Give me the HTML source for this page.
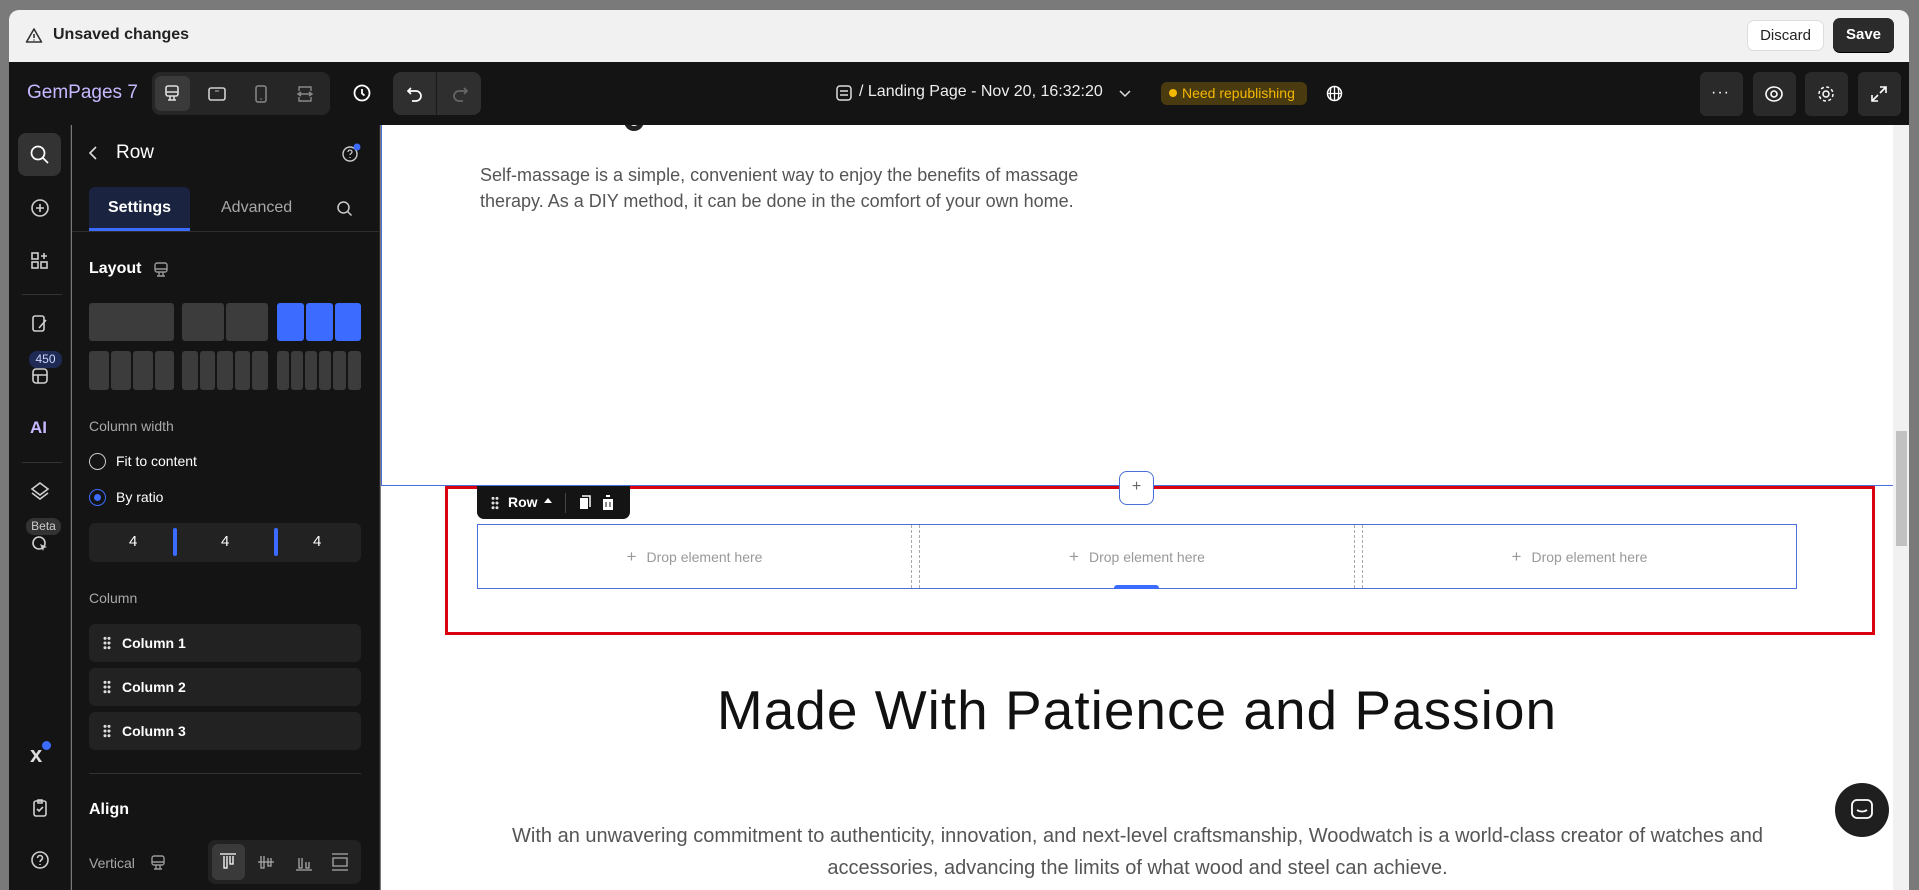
<!DOCTYPE html>
<html><head><meta charset="utf-8"><style>
*{box-sizing:border-box;margin:0;padding:0}
body{width:1919px;height:890px;background:#7a7a7a;font-family:"Liberation Sans",sans-serif;position:relative;overflow:hidden}
.a{position:absolute}
.top{left:9px;top:10px;width:1900px;height:52px;background:#f1f1f1;border-radius:10px 10px 0 0}
.tb{left:9px;top:62px;width:1900px;height:63px;background:#141414}
.rail{left:9px;top:125px;width:62px;height:765px;background:#141414;border-right:1px solid #2a2a2a}
.panel{left:72px;top:125px;width:308px;height:765px;background:#141414;border-right:1px solid #2a2a2a}
.canvas{left:381px;top:125px;width:1512px;height:765px;background:#fff}
.btn{background:#2a2a2a;border-radius:6px}
.w{color:#fff}
.g{color:#a8a8a8}
.lb{background:#3c3c3c;border-radius:3px}
.lbb{background:#3b6cff;border-radius:3px}
.col{left:89px;width:272px;height:38px;background:#222;border-radius:6px;color:#fff;font-size:14px;font-weight:bold;line-height:38px;padding-left:33px}
.dots{position:absolute;left:14px;top:12px;width:8px;height:14px;background:radial-gradient(circle,#ddd 1.4px,transparent 1.6px) 0 0/4px 4.7px}
.ic{stroke:#cfcfcf;fill:none;stroke-width:1.6}
</style></head><body>
<div class="a top"></div>
<svg class="a" style="left:25px;top:27px" width="18" height="17" viewBox="0 0 18 17"><path d="M9 2L16.5 15H1.5Z" fill="none" stroke="#333" stroke-width="1.6" stroke-linejoin="round"/><path d="M9 7v4M9 12.5v1" stroke="#333" stroke-width="1.6"/></svg>
<div class="a" style="left:53px;top:26px;font-size:16px;font-weight:bold;color:#222">Unsaved changes</div>
<div class="a" style="left:1747px;top:20px;width:77px;height:31px;background:#fff;border:1px solid #ddd;border-radius:7px;font-size:15px;color:#222;text-align:center;line-height:29px">Discard</div>
<div class="a" style="left:1833px;top:18px;width:61px;height:34px;background:#2b2b2b;border-radius:7px;font-size:15px;font-weight:bold;color:#fff;text-align:center;line-height:34px;box-shadow:0 1px 0 #000">Save</div>

<div class="a tb"></div>
<div class="a" style="left:27px;top:82px;font-size:19px;color:#c8b8ff">GemPages 7</div>
<div class="a" style="left:152px;top:72px;width:178px;height:43px;background:#262626;border-radius:8px"></div>
<div class="a" style="left:155px;top:76px;width:35px;height:35px;background:#3a3a3a;border-radius:6px"></div>
<svg class="a" style="left:163px;top:84px" width="18" height="20"><rect x="3" y="2" width="12" height="10" rx="2" fill="none" stroke="#ddd" stroke-width="1.6"/><path d="M3 8h12M7 12v4M11 12v4M5 16h8" stroke="#ddd" stroke-width="1.6"/></svg>
<svg class="a" style="left:207px;top:84px" width="20" height="20"><rect x="2" y="4" width="16" height="12" rx="2" class="ic" stroke="#888"/><path d="M8 7h4" stroke="#888" stroke-width="1.5"/></svg>
<svg class="a" style="left:251px;top:84px" width="20" height="20"><rect x="5" y="2" width="10" height="16" rx="2" fill="none" stroke="#888" stroke-width="1.5"/><path d="M9 15h2" stroke="#888"/></svg>
<svg class="a" style="left:295px;top:84px" width="20" height="20"><path d="M4 7V3h12v4M4 13v4h12v-4M3 10h14M6 8l-3 2 3 2M14 8l3 2-3 2" fill="none" stroke="#888" stroke-width="1.4"/></svg>
<svg class="a" style="left:352px;top:83px" width="20" height="20"><circle cx="10" cy="10" r="7.5" fill="none" stroke="#fff" stroke-width="1.8"/><path d="M10 6v4.5l2.5 2" stroke="#fff" stroke-width="1.8" fill="none"/></svg>
<div class="a" style="left:393px;top:72px;width:88px;height:43px;background:#2f2f2f;border-radius:8px"></div>
<div class="a" style="left:436px;top:72px;width:1px;height:43px;background:#1a1a1a"></div>
<svg class="a" style="left:405px;top:84px" width="20" height="20"><path d="M6 4L3 7l3 3M3 7h8a5 5 0 010 10H7" fill="none" stroke="#fff" stroke-width="1.7"/></svg>
<svg class="a" style="left:450px;top:84px" width="20" height="20"><path d="M14 4l3 3-3 3M17 7H9a5 5 0 000 10h4" fill="none" stroke="#666" stroke-width="1.7"/></svg>
<svg class="a" style="left:835px;top:84px" width="18" height="18"><rect x="2" y="2" width="14" height="14" rx="3" fill="none" stroke="#ddd" stroke-width="1.5"/><path d="M5 7h8M5 11h8" stroke="#ddd" stroke-width="1.4"/></svg>
<div class="a" style="left:859px;top:83px;font-size:16px;color:#eee">/ Landing Page - Nov 20, 16:32:20</div>
<svg class="a" style="left:1118px;top:86px" width="14" height="14"><path d="M2 5l5 5 5-5" fill="none" stroke="#ddd" stroke-width="1.5"/></svg>
<div class="a" style="left:1161px;top:82px;width:146px;height:23px;background:#4a3a10;border-radius:6px;color:#f5b800;font-size:14px;line-height:23px;padding-left:21px">Need republishing</div>
<div class="a" style="left:1169px;top:89px;width:8px;height:8px;border-radius:50%;background:#f5b800"></div>
<svg class="a" style="left:1325px;top:84px" width="19" height="19"><circle cx="9.5" cy="9.5" r="7" fill="none" stroke="#fff" stroke-width="1.5"/><path d="M2.5 9.5h14M9.5 2.5v14M6 4c-1 3-1 8 0 11M13 4c1 3 1 8 0 11" fill="none" stroke="#fff" stroke-width="1.3"/></svg>
<div class="a btn" style="left:1700px;top:72px;width:43px;height:44px"></div>
<div class="a" style="left:1711px;top:84px;color:#fff;font-size:16px;letter-spacing:1px">···</div>
<div class="a btn" style="left:1753px;top:72px;width:43px;height:44px"></div>
<svg class="a" style="left:1764px;top:84px" width="20" height="20"><ellipse cx="10" cy="10" rx="8" ry="7" fill="none" stroke="#fff" stroke-width="1.6"/><circle cx="10" cy="10" r="3" fill="none" stroke="#fff" stroke-width="1.6"/></svg>
<div class="a btn" style="left:1805px;top:72px;width:43px;height:44px"></div>
<svg class="a" style="left:1816px;top:84px" width="20" height="20"><circle cx="10" cy="10" r="3" fill="none" stroke="#fff" stroke-width="1.5"/><circle cx="10" cy="10" r="7" fill="none" stroke="#fff" stroke-width="1.5" stroke-dasharray="3 2.5"/></svg>
<div class="a btn" style="left:1858px;top:72px;width:43px;height:44px"></div>
<svg class="a" style="left:1869px;top:84px" width="20" height="20"><path d="M11 3h6v6M17 3l-6 6M9 17H3v-6M3 17l6-6" fill="none" stroke="#fff" stroke-width="1.6"/></svg>

<div class="a rail"></div>
<div class="a" style="left:18px;top:133px;width:43px;height:43px;background:#333;border-radius:8px"></div>
<svg class="a" style="left:29px;top:144px" width="22" height="22"><circle cx="9" cy="9" r="6.5" fill="none" stroke="#fff" stroke-width="1.7"/><path d="M14 14l5 5" stroke="#fff" stroke-width="1.7"/></svg>
<svg class="a" style="left:29px;top:197px" width="22" height="22"><circle cx="11" cy="11" r="8" class="ic"/><path d="M11 7v8M7 11h8" class="ic"/></svg>
<svg class="a" style="left:30px;top:251px" width="20" height="20"><rect x="2" y="2" width="6" height="6" class="ic"/><rect x="2" y="11" width="6" height="6" class="ic"/><rect x="11" y="11" width="6" height="6" class="ic"/><path d="M14 2v6M11 5h6" class="ic"/></svg>
<div class="a" style="left:22px;top:294px;width:40px;height:1px;background:#333"></div>
<svg class="a" style="left:30px;top:314px" width="20" height="20"><rect x="3" y="2" width="11" height="15" rx="2" class="ic"/><path d="M9 14l7-8" class="ic"/></svg>
<div class="a" style="left:29px;top:351px;width:33px;height:17px;background:#1f2a55;border-radius:8px;color:#cfd6ff;font-size:12px;text-align:center;line-height:17px">450</div>
<svg class="a" style="left:30px;top:366px" width="20" height="20"><rect x="3" y="3" width="14" height="14" rx="3" class="ic"/><path d="M3 9h14M8 9v8" class="ic"/></svg>
<div class="a" style="left:30px;top:418px;color:#c8b8ff;font-size:17px;font-weight:bold">AI</div>
<div class="a" style="left:22px;top:462px;width:40px;height:1px;background:#333"></div>
<svg class="a" style="left:30px;top:481px" width="20" height="20"><path d="M10 2l8 6-8 6-8-6z" class="ic"/><path d="M2 12l8 6 8-6" class="ic"/></svg>
<div class="a" style="left:26px;top:518px;width:35px;height:17px;background:#333;border-radius:8px;color:#ccc;font-size:12px;text-align:center;line-height:17px">Beta</div>
<svg class="a" style="left:31px;top:535px" width="20" height="20"><circle cx="8" cy="8" r="6" class="ic"/><path d="M9 9l7 3-3 1-1 3z" fill="#ccc"/></svg>
<div class="a" style="left:30px;top:742px;color:#ddd;font-size:22px;font-weight:bold">x</div>
<div class="a" style="left:42px;top:741px;width:9px;height:9px;border-radius:50%;background:#3b6cff"></div>
<svg class="a" style="left:30px;top:798px" width="20" height="20"><rect x="4" y="3" width="12" height="15" rx="2" class="ic"/><path d="M7 11l2 2 4-4M8 2h4v3H8z" class="ic"/></svg>
<svg class="a" style="left:30px;top:850px" width="20" height="20"><circle cx="10" cy="10" r="8" class="ic"/><path d="M7.5 8a2.5 2.5 0 115 0c0 2-2.5 2-2.5 4M10 14v1" class="ic"/></svg>

<div class="a panel"></div>
<svg class="a" style="left:87px;top:145px" width="14" height="16"><path d="M9 2L3 8l6 6" fill="none" stroke="#ddd" stroke-width="1.6"/></svg>
<div class="a w" style="left:116px;top:142px;font-size:19px">Row</div>
<svg class="a" style="left:341px;top:143px" width="20" height="20"><circle cx="9" cy="11" r="7" fill="none" stroke="#ccc" stroke-width="1.4"/><path d="M7 9a2 2 0 114 0c0 1.5-2 1.5-2 3M9 14v1" fill="none" stroke="#ccc" stroke-width="1.3"/><circle cx="16" cy="4" r="3.5" fill="#3b6cff"/></svg>
<div class="a" style="left:72px;top:231px;width:308px;height:1px;background:#2e2e2e"></div>
<div class="a" style="left:89px;top:187px;width:101px;height:44px;background:#1a2340;border-radius:6px 6px 0 0;border-bottom:3px solid #3b6cff;color:#fff;font-size:16px;font-weight:bold;text-align:center;line-height:42px">Settings</div>
<div class="a g" style="left:221px;top:199px;font-size:16px">Advanced</div>
<svg class="a" style="left:336px;top:200px" width="18" height="18"><circle cx="7.5" cy="7.5" r="5.5" fill="none" stroke="#ccc" stroke-width="1.5"/><path d="M11.5 11.5l4 4" stroke="#ccc" stroke-width="1.5"/></svg>
<div class="a w" style="left:89px;top:260px;font-size:16px;font-weight:bold">Layout</div>
<svg class="a" style="left:153px;top:261px" width="16" height="18"><rect x="2" y="2" width="12" height="9" rx="2" fill="none" stroke="#999" stroke-width="1.4"/><path d="M2 8h12M6 11v4M10 11v4M4 15h8" stroke="#999" stroke-width="1.4"/></svg>
<div class="a lb" style="left:89px;top:303px;width:85px;height:38px"></div>
<div class="a lb" style="left:182px;top:303px;width:42px;height:38px"></div>
<div class="a lb" style="left:226px;top:303px;width:42px;height:38px"></div>
<div class="a lbb" style="left:277px;top:303px;width:27px;height:38px"></div>
<div class="a lbb" style="left:306px;top:303px;width:27px;height:38px"></div>
<div class="a lbb" style="left:335px;top:303px;width:26px;height:38px"></div>
<div class="a lb" style="left:89px;top:351px;width:20px;height:39px"></div><div class="a lb" style="left:111px;top:351px;width:20px;height:39px"></div><div class="a lb" style="left:133px;top:351px;width:20px;height:39px"></div><div class="a lb" style="left:155px;top:351px;width:19px;height:39px"></div>
<div class="a lb" style="left:182px;top:351px;width:16px;height:39px"></div><div class="a lb" style="left:200px;top:351px;width:15px;height:39px"></div><div class="a lb" style="left:217px;top:351px;width:16px;height:39px"></div><div class="a lb" style="left:235px;top:351px;width:15px;height:39px"></div><div class="a lb" style="left:252px;top:351px;width:16px;height:39px"></div>
<div class="a lb" style="left:277px;top:351px;width:12px;height:39px"></div><div class="a lb" style="left:291px;top:351px;width:12px;height:39px"></div><div class="a lb" style="left:305px;top:351px;width:12px;height:39px"></div><div class="a lb" style="left:319px;top:351px;width:12px;height:39px"></div><div class="a lb" style="left:333px;top:351px;width:13px;height:39px"></div><div class="a lb" style="left:348px;top:351px;width:13px;height:39px"></div>
<div class="a g" style="left:89px;top:418px;font-size:14px">Column width</div>
<div class="a" style="left:89px;top:453px;width:17px;height:17px;border:1.5px solid #ccc;border-radius:50%"></div>
<div class="a w" style="left:116px;top:453px;font-size:14px">Fit to content</div>
<div class="a" style="left:89px;top:489px;width:17px;height:17px;border:1.5px solid #3b6cff;border-radius:50%"></div>
<div class="a" style="left:94px;top:494px;width:7px;height:7px;background:#3b6cff;border-radius:50%"></div>
<div class="a w" style="left:116px;top:489px;font-size:14px">By ratio</div>
<div class="a" style="left:89px;top:523px;width:272px;height:39px;background:#222;border-radius:6px"></div>
<div class="a w" style="left:129px;top:533px;font-size:15px">4</div>
<div class="a" style="left:173px;top:528px;width:4px;height:28px;background:#3b6cff;border-radius:2px"></div>
<div class="a w" style="left:221px;top:533px;font-size:15px">4</div>
<div class="a" style="left:274px;top:528px;width:4px;height:28px;background:#3b6cff;border-radius:2px"></div>
<div class="a w" style="left:313px;top:533px;font-size:15px">4</div>
<div class="a g" style="left:89px;top:590px;font-size:14px">Column</div>
<div class="a col" style="top:624px"><span class="dots"></span>Column 1</div>
<div class="a col" style="top:668px"><span class="dots"></span>Column 2</div>
<div class="a col" style="top:712px"><span class="dots"></span>Column 3</div>
<div class="a" style="left:89px;top:773px;width:272px;height:1px;background:#333"></div>
<div class="a w" style="left:89px;top:801px;font-size:16px;font-weight:bold">Align</div>
<div class="a g" style="left:89px;top:855px;font-size:14px">Vertical</div>
<svg class="a" style="left:150px;top:854px" width="16" height="18"><rect x="2" y="2" width="12" height="9" rx="2" fill="none" stroke="#999" stroke-width="1.4"/><path d="M2 8h12M6 11v4M10 11v4M4 15h8" stroke="#999" stroke-width="1.4"/></svg>
<div class="a" style="left:208px;top:840px;width:153px;height:44px;background:#222;border-radius:7px"></div>
<div class="a" style="left:212px;top:844px;width:33px;height:36px;background:#3a3a3a;border-radius:6px"></div>
<svg class="a" style="left:218px;top:852px" width="140" height="20"><path d="M2 2h16M6 4v12h3V4M12 4v8h3V4" fill="none" stroke="#fff" stroke-width="1.3"/><path d="M40 10h16M43 4v12h3V4M50 6v8h3V6" fill="none" stroke="#aaa" stroke-width="1.3"/><path d="M78 18h16M81 6v10h3V6M88 10v6h3v-6" fill="none" stroke="#aaa" stroke-width="1.3"/><path d="M114 2h16M114 18h16M115 6h14v8h-14z" fill="none" stroke="#aaa" stroke-width="1.3"/></svg>

<div class="a canvas"></div>
<div class="a" style="left:620px;top:125px;width:30px;height:8px;overflow:hidden"><div style="position:absolute;left:4px;top:-8px;width:20px;height:14px;border:5px solid #222;border-top:none;border-radius:0 0 10px 10px"></div></div>
<div class="a" style="left:480px;top:163px;width:620px;font-size:18px;line-height:25.5px;color:#555">Self-massage is a simple, convenient way to enjoy the benefits of massage therapy. As a DIY method, it can be done in the comfort of your own home.</div>
<div class="a" style="left:381px;top:125px;width:1px;height:361px;background:#4a6fd6"></div>
<div class="a" style="left:381px;top:485px;width:1512px;height:1px;background:#4a6fd6"></div>
<div class="a" style="left:445px;top:486px;width:1430px;height:149px;border:3px solid #d90010"></div>
<div class="a" style="left:1119px;top:471px;width:35px;height:34px;background:#fff;border:1px solid #4a6fd6;border-radius:8px;color:#666;text-align:center;line-height:30px;font-size:16px">+</div>
<div class="a" style="left:477px;top:486px;width:153px;height:33px;background:#141414;border-radius:0 0 7px 7px"></div>
<span class="a dots" style="left:491px;top:496px;width:8px;height:14px;background:radial-gradient(circle,#ddd 1.4px,transparent 1.6px) 0 0/4px 4.7px"></span>
<div class="a w" style="left:508px;top:494px;font-size:14px;font-weight:bold">Row</div>
<div class="a" style="left:544px;top:498px;width:0;height:0;border-left:4px solid transparent;border-right:4px solid transparent;border-bottom:5px solid #fff"></div>
<div class="a" style="left:565px;top:493px;width:1px;height:20px;background:#444"></div>
<svg class="a" style="left:577px;top:493px" width="40" height="20"><rect x="3" y="5" width="8" height="11" fill="#fff"/><path d="M5 3h8v11" fill="none" stroke="#fff" stroke-width="1.5"/><path d="M25 4h12M29 4V2h4v2M26 6h10v11H26z" fill="#fff"/><path d="M29 9v5M33 9v5" stroke="#141414" stroke-width="1"/></svg>
<div class="a" style="left:477px;top:524px;width:1320px;height:65px;border:1px solid #4a6fd6"></div>
<div class="a" style="left:911px;top:525px;width:9px;height:63px;border-left:1px dashed #aaa;border-right:1px dashed #aaa"></div>
<div class="a" style="left:1354px;top:525px;width:9px;height:63px;border-left:1px dashed #aaa;border-right:1px dashed #aaa"></div>
<div class="a" style="left:1114px;top:585px;width:45px;height:4px;background:#3b6cff;border-radius:3px 3px 0 0"></div>
<div class="a" style="left:478px;top:547px;width:433px;text-align:center;color:#999;font-size:14px"><span style="font-size:17px;margin-right:10px">+</span>Drop element here</div>
<div class="a" style="left:920px;top:547px;width:434px;text-align:center;color:#999;font-size:14px"><span style="font-size:17px;margin-right:10px">+</span>Drop element here</div>
<div class="a" style="left:1363px;top:547px;width:433px;text-align:center;color:#999;font-size:14px"><span style="font-size:17px;margin-right:10px">+</span>Drop element here</div>
<div class="a" style="left:381px;top:678px;width:1512px;text-align:center;font-size:55px;color:#111;font-weight:300;letter-spacing:1px">Made With Patience and Passion</div>
<div class="a" style="left:490px;top:820px;width:1295px;text-align:center;font-size:20px;line-height:32px;color:#555">With an unwavering commitment to authenticity, innovation, and next-level craftsmanship, Woodwatch is a world-class creator of watches and accessories, advancing the limits of what wood and steel can achieve.</div>
<div class="a" style="left:1835px;top:783px;width:54px;height:54px;border-radius:50%;background:#1f1f1f"></div>
<svg class="a" style="left:1850px;top:798px" width="24" height="24"><rect x="2" y="2" width="20" height="18" rx="5" fill="none" stroke="#fff" stroke-width="1.8"/><path d="M7 12c3 2 7 2 10 0" fill="none" stroke="#fff" stroke-width="1.8"/></svg>
<div class="a" style="left:1893px;top:125px;width:16px;height:765px;background:#f1f1f1"></div>
<div class="a" style="left:1896px;top:431px;width:11px;height:115px;background:#c1c1c1"></div>
<div class="a" style="left:1909px;top:10px;width:10px;height:880px;background:#7a7a7a"></div>
</body></html>
